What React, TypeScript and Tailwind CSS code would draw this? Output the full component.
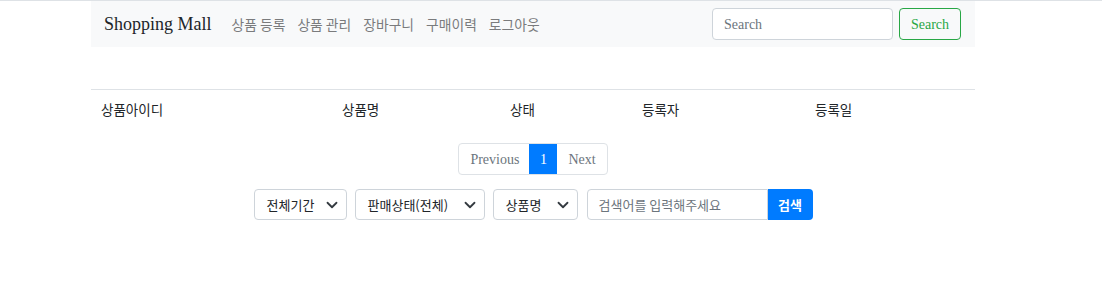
import React from 'react';

const kr = "font-['Noto_Sans_CJK_KR',sans-serif]";
const serif = "font-['Liberation_Serif','Noto_Sans_CJK_KR',serif]";

const Chevron: React.FC = () => (
  <svg className="w-3 h-3 text-[#343a40]" viewBox="0 0 16 16" fill="none">
    <path d="M2 5l6 6 6-6" stroke="currentColor" strokeWidth={2.4} strokeLinecap="round" strokeLinejoin="round" />
  </svg>
);

const Select: React.FC<{ label: string; width: string }> = ({ label, width }) => (
  <div
    className={`${width} h-[31px] flex items-center justify-between pl-3 pr-2 border border-[#ced4da] rounded bg-white text-[13px] text-[#212529] ${kr}`}
  >
    <span>{label}</span>
    <Chevron />
  </div>
);

const App: React.FC = () => {
  const columns = [
    { label: '상품아이디', w: 'w-[241px]' },
    { label: '상품명', w: 'w-[168px]' },
    { label: '상태', w: 'w-[132px]' },
    { label: '등록자', w: 'w-[173px]' },
    { label: '등록일', w: 'flex-1' },
  ];

  return (
    <div className="min-h-[291px] bg-white border-t border-[#dee2e6]">
      <div className="w-[884px] ml-[91px]">
        {/* Navbar */}
        <nav className="h-[46px] bg-[#f8f9fa] flex items-center pl-[13px] pr-[14px]">
          <span className={`text-[18px] text-[#212529] ${serif} mr-[20px]`}>Shopping Mall</span>
          <div className={`flex gap-[12px] text-[13.8px] text-[#7a7b7d] ${kr}`}>
            <span>상품 등록</span>
            <span>상품 관리</span>
            <span>장바구니</span>
            <span>구매이력</span>
            <span>로그아웃</span>
          </div>
          <div className="ml-auto flex items-center gap-[6px]">
            <div className={`w-[181px] h-[32px] border border-[#ced4da] rounded bg-white flex items-center px-[11px] text-[14px] text-[#6c757d] ${serif}`}>
              Search
            </div>
            <button className={`w-[62px] h-[32px] border border-[#28a745] rounded text-[14px] text-[#28a745] ${serif}`}>
              Search
            </button>
          </div>
        </nav>

        {/* Table header */}
        <div className="mt-[42px] border-t border-[#dee2e6] flex h-[40px] items-center">
          {columns.map((c) => (
            <div key={c.label} className={`${c.w} pl-[10px] text-[13.5px] font-normal text-[#212529] ${kr}`}>
              {c.label}
            </div>
          ))}
        </div>

        {/* Pagination */}
        <div className="mt-[14px] flex justify-center">
          <div className={`flex h-[32px] border border-[#dee2e6] rounded text-[14px] ${serif}`}>
            <span className="pl-[11px] pr-[10px] flex items-center text-[#6c757d]">Previous</span>
            <span className="w-[28px] flex items-center justify-center bg-[#007bff] text-white">1</span>
            <span className="px-[11px] flex items-center text-[#6c757d]">Next</span>
          </div>
        </div>

        {/* Search filters */}
        <div className="mt-[14px] flex justify-center gap-[8px]">
          <Select label="전체기간" width="w-[93px]" />
          <Select label="판매상태(전체)" width="w-[130px]" />
          <Select label="상품명" width="w-[85px]" />
          <div className="flex ml-px">
            <div className={`w-[181px] h-[31px] border border-[#ced4da] rounded-l bg-white flex items-center px-[11px] text-[13px] text-[#6c757d] ${kr}`}>
              검색어를 입력해주세요
            </div>
            <button className={`w-[45px] h-[31px] bg-[#007bff] rounded-r text-white text-[13px] font-bold ${kr}`}>
              검색
            </button>
          </div>
        </div>
      </div>
    </div>
  );
};

export default App;
